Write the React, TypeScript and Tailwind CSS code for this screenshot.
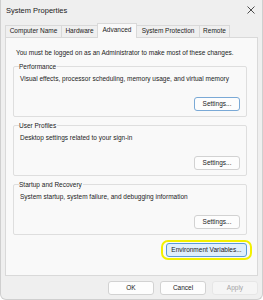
const font = "font-['Segoe_UI','Liberation_Sans',Arial,sans-serif]";

function Btn({
  label,
  className = "",
  disabled = false,
}: {
  label: string;
  className?: string;
  disabled?: boolean;
}) {
  return (
    <button
      disabled={disabled}
      className={`flex h-[14px] items-center justify-center rounded-[3px] border text-[6.5px] leading-none ${
        disabled
          ? "border-[#e6e6e6] bg-[#f5f5f5] text-[#a3a3a3]"
          : "border-[#d2d2d2] bg-[#fdfdfd] text-[#1b1b1b]"
      } ${className}`}
    >
      {label}
    </button>
  );
}

function Group({
  title,
  text,
  focused = false,
}: {
  title: string;
  text: string;
  focused?: boolean;
}) {
  return (
    <div className="relative flex h-[51px] w-[234px] flex-col rounded-[2px] border border-[#dedede]">
      <span className="absolute left-[5px] top-[-5px] bg-[#f9f9f9] pr-[1px] text-[6.5px] leading-[9px]">
        {title}
      </span>
      <p className="pl-[6px] pt-[7px] text-[6.5px] leading-[9px]">{text}</p>
      <div className="mt-auto flex justify-end pb-[5px] pr-[6px]">
        <Btn
          label="Settings..."
          className={`w-[46px] ${focused ? "!border-[#7aa9d6]" : ""}`}
        />
      </div>
    </div>
  );
}

export default function App() {
  const tabs = ["Computer Name", "Hardware", "Advanced", "System Protection", "Remote"];
  const widths = ["w-[56px]", "w-[36px]", "w-[40px]", "w-[62px]", "w-[31px]"];

  return (
    <div
      className={`${font} flex h-[300px] w-[263px] flex-col overflow-hidden rounded-b-[6px] border-b border-l border-r border-[#cfcfcf] bg-[#efefef] text-[#1b1b1b]`}
    >
      {/* title bar */}
      <div className="flex h-[21px] items-center justify-between pl-[5px] pr-[4px] pt-px">
        <span className="text-[7.5px] leading-none">System Properties</span>
        <svg width="14" height="14" viewBox="0 0 14 14" className="mb-[3px]">
          <path d="M3.5 3.5 L10.5 10.5 M10.5 3.5 L3.5 10.5" stroke="#3a3a3a" strokeWidth="0.9" />
        </svg>
      </div>

      {/* tabs */}
      <div className="relative z-10 mt-[1px] flex h-[15px] items-end pl-[4px]">
        {tabs.map((t, i) =>
          t === "Advanced" ? (
            <div
              key={t}
              className={`${widths[i]} -mb-px flex h-[15px] items-center justify-center border border-b-0 border-[#d9d9d9] bg-[#f9f9f9] pb-[2px] text-[6.5px] leading-none`}
            >
              {t}
            </div>
          ) : (
            <div
              key={t}
              className={`${widths[i]} flex h-[12px] items-center justify-center border border-b-0 border-r-0 border-[#d9d9d9] bg-[#efefef] text-[6.5px] leading-none last:border-r ${
                i === 3 ? "border-l-0" : ""
              }`}
            >
              {t}
            </div>
          )
        )}
      </div>

      {/* panel */}
      <div className="mx-[4px] flex h-[239px] flex-col border border-[#d9d9d9] bg-[#f9f9f9] pl-[7px]">
        <p className="pl-[3px] pt-[10px] text-[6.5px] leading-[9px]">
          You must be logged on as an Administrator to make most of these changes.
        </p>
        <div className="mt-[9px] flex flex-col gap-[8px]">
          <Group
            title="Performance"
            text="Visual effects, processor scheduling, memory usage, and virtual memory"
            focused
          />
          <Group title="User Profiles" text="Desktop settings related to your sign-in" />
          <Group
            title="Startup and Recovery"
            text="System startup, system failure, and debugging information"
          />
        </div>
        <div className="mt-[8px] flex w-[234px] justify-end">
          <div className="relative">
            <div className="absolute -bottom-[3px] -left-[5px] -right-[5px] -top-[3px] rounded-[7px] border-[2px] border-[#f2f000]" />
            <button className="relative flex h-[14px] w-[81px] items-center justify-center rounded-[3px] border border-[#5a9bd8] bg-[#dfeefb] text-[6.5px] leading-none text-[#1b1b1b]">
              Environment Variables...
            </button>
          </div>
        </div>
      </div>

      {/* footer buttons */}
      <div className="mt-[5px] flex justify-end gap-[6px] pr-[4px]">
        <Btn label="OK" className="w-[46px]" />
        <Btn label="Cancel" className="w-[46px]" />
        <Btn label="Apply" className="w-[46px]" disabled />
      </div>
    </div>
  );
}
